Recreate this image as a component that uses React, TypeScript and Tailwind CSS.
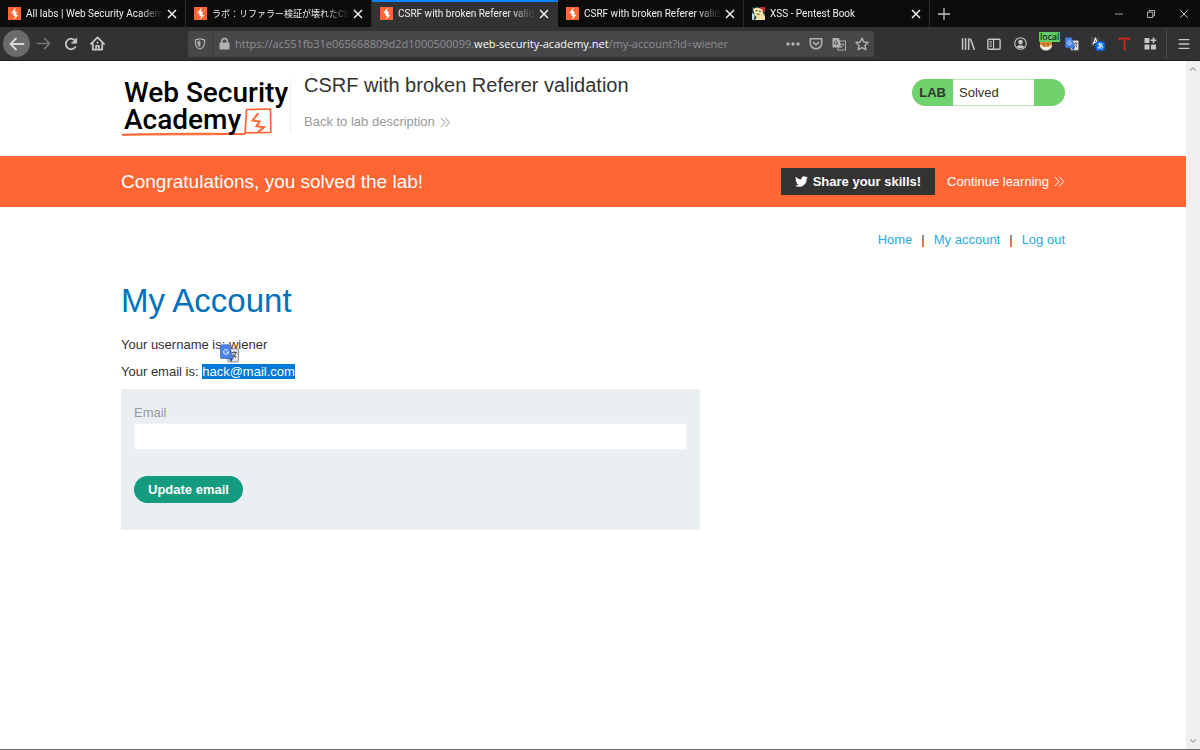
import React, { useState } from 'react';
import type { ReactNode } from 'react';
import { FaTwitter } from 'react-icons/fa';

function BoltIcon() {
  return (
    <svg viewBox="0 0 13 13" className="size-[13px] shrink-0" aria-hidden="true">
      <rect width="13" height="13" fill="#ff6633" />
      <path d="M7.600 .3 3.200 6.300h2.600L5 8.300 7.200 9.200 5.600 12.700 10.200 8.200 7.800 7.100 9.300 5 6.900 4.200z" fill="#fff" />
    </svg>
  );
}

function BookIcon() {
  return (
    <svg viewBox="0 0 14 14" className="size-[13px] shrink-0" aria-hidden="true">
      <rect width="14" height="14" fill="#16323c" />
      <rect x="9" width="5" height="5" fill="#d8242f" />
      <path d="M1 2 6 .5l5 2 1 4 2 3.500V14H3l2-3-2-2-1-3z" fill="#f6dfa0" />
      <path d="M0 6l3 3-1 5H0z" fill="#b9d8e8" />
      <path d="M4 4h2M7.500 4.500h2M5.500 7.500 8 8" stroke="#3a3128" strokeWidth="1" fill="none" />
    </svg>
  );
}

function CloseIcon() {
  return (
    <svg viewBox="0 0 10 10" className="size-[10px]" fill="none" stroke="currentColor" strokeWidth="1.500" aria-hidden="true">
      <path d="M1 1l8 8M9 1 1 9" />
    </svg>
  );
}

function DoubleChevron() {
  return (
    <svg viewBox="0 0 11 11" className="size-[11px] shrink-0" fill="none" stroke="currentColor" strokeWidth="1" aria-hidden="true">
      <path d="M.8.8 5 5.500.8 10.200M5.300.8 9.600 5.500 5.300 10.200" />
    </svg>
  );
}

function Stroke({ children, className = 'size-4' }: { children: ReactNode; className?: string }) {
  return (
    <svg
      viewBox="0 0 16 16"
      className={className}
      fill="none"
      stroke="currentColor"
      strokeWidth="1.6"
      strokeLinecap="round"
      strokeLinejoin="round"
      aria-hidden="true"
    >
      {children}
    </svg>
  );
}

function TranslateBadge({ className = 'size-4' }: { className?: string }) {
  return (
    <svg viewBox="0 0 18 18" className={className} aria-hidden="true">
      <rect x="7.500" y="4.500" width="10" height="12.500" rx="1" fill="#e4e4e4" stroke="#777" strokeWidth=".8" />
      <path d="M11 8h5M13.500 6.800V8M15.200 8c-.4 2-1.600 3.600-3 4.600M12.200 9.600c.8 1.400 1.800 2.400 3.200 3" stroke="#555" strokeWidth="1" fill="none" />
      <path d="M8.500 13.500h4l-2 3.800z" fill="#3450a8" />
      <path d="M1 .8h7.500l4 12.900H1a.6.6 0 0 1-.6-.6V1.400A.6.6 0 0 1 1 .8z" fill="#4a83ee" stroke="#3a62ad" strokeWidth=".7" />
      <path d="M7.300 5.800A2.300 2.300 0 1 0 8 7.500H5.800" stroke="#dbe7ff" strokeWidth="1" fill="none" />
    </svg>
  );
}

function Logo() {
  return (
    <a
      href="#academy"
      aria-label="Web Security Academy"
      className="relative block h-[58px] w-[165px] font-['Roboto',sans-serif] text-[28px] leading-[27px] font-medium whitespace-nowrap text-black"
    >
      <svg viewBox="0 0 165 58" className="absolute inset-0 h-full w-full" fill="none" stroke="#ff6633" aria-hidden="true">
        <path d="M1 55.500C30 55 80 54.300 124 55L125.500 30.500 149.500 30 149.800 53.500 123 53.800" strokeWidth="1.700" strokeLinejoin="round" />
        <path d="M1 56.300C40 55.500 90 56.300 124 55" strokeWidth="1" />
        <path d="M137.500 34 131.500 41.500 138.500 42.500 135.500 47.300 143 48.300 137 53" strokeWidth="2" />
      </svg>
      <span className="relative block pl-[3px]">Web Security</span>
      <span className="relative block pl-[3px]">Academy</span>
    </a>
  );
}

type TabInfo = { title: string; icon: 'bolt' | 'book'; compact?: boolean };

const tabs: TabInfo[] = [
  { title: 'All labs | Web Security Academy', icon: 'bolt' },
  { title: 'ラボ：リファラー検証が壊れたCSRF', icon: 'bolt', compact: true },
  { title: 'CSRF with broken Referer validation', icon: 'bolt' },
  { title: 'CSRF with broken Referer validation', icon: 'bolt' },
  { title: 'XSS - Pentest Book', icon: 'book' },
];

function TabStrip() {
  const [active, setActive] = useState(2);
  return (
    <div className="flex h-[27px] items-stretch bg-[#0c0c0d] text-[#f0f0f2]">
      {tabs.map((tab, i) => (
        <div
          key={i}
          className={
            i === active
              ? 'flex min-w-0 flex-[0_1_186px] items-center border-t-2 border-[#0a84ff] bg-[#323234] pr-[7px] pb-[2px] pl-2'
              : 'flex min-w-0 flex-[0_1_186px] items-center border-r border-[#2a2a2c] pr-[6px] pl-2'
          }
        >
          <button type="button" onClick={() => setActive(i)} className="flex min-w-0 flex-1 items-center gap-[5px] text-left">
            {tab.icon === 'bolt' ? <BoltIcon /> : <BookIcon />}
            <span
              className={`min-w-0 flex-1 overflow-hidden leading-4 whitespace-nowrap [mask-image:linear-gradient(to_right,black_calc(100%-24px),transparent)] ${
                tab.compact ? 'text-[9px]' : 'text-[10px]'
              }`}
            >
              {tab.title}
            </span>
          </button>
          <button type="button" aria-label="Close tab" className="ml-[2px] flex size-[14px] shrink-0 items-center justify-center">
            <CloseIcon />
          </button>
        </div>
      ))}
      <button type="button" aria-label="New tab" className="flex w-7 items-center justify-center text-[#c4c4c6]">
        <svg viewBox="0 0 12 12" className="size-3" fill="none" stroke="currentColor" strokeWidth="1.300" aria-hidden="true">
          <path d="M6 0v12M0 6h12" />
        </svg>
      </button>
      <div className="ml-auto flex items-center text-[#c0c0c0]">
        <button type="button" aria-label="Minimize" className="flex h-full w-8 items-center justify-center">
          <svg viewBox="0 0 8 8" className="size-2" stroke="currentColor" strokeWidth=".8" aria-hidden="true">
            <path d="M0 4h8" />
          </svg>
        </button>
        <button type="button" aria-label="Restore" className="flex h-full w-8 items-center justify-center">
          <svg viewBox="0 0 8 8" className="size-2" fill="none" stroke="currentColor" strokeWidth=".9" aria-hidden="true">
            <path d="M.5 2.200h5.300v5.300H.5zM2.200 2V.5h5.300v5.300H6" />
          </svg>
        </button>
        <button type="button" aria-label="Close window" className="flex h-full w-[33px] items-center justify-center">
          <svg viewBox="0 0 8 8" className="size-2" fill="none" stroke="currentColor" aria-hidden="true">
            <path d="M.3.3l7.400 7.400M7.700.3.3 7.700" />
          </svg>
        </button>
      </div>
    </div>
  );
}

function ToolButton({ label, children }: { label: string; children: ReactNode }) {
  return (
    <button type="button" aria-label={label} className="relative flex h-[26px] w-[26px] shrink-0 items-center justify-center">
      {children}
    </button>
  );
}

function Toolbar() {
  return (
    <div className="flex h-[34px] items-center border-b border-[#1c1c1e] bg-[#323234] pl-[3px] text-[#c6c6c8]">
      <button type="button" aria-label="Back" className="flex size-[27px] shrink-0 items-center justify-center rounded-full bg-[#6b6b6d] text-[#d8d8da]">
        <Stroke>
          <path d="M14.500 8h-13M7 2.500 1.500 8 7 13.500" strokeWidth="1.800" />
        </Stroke>
      </button>
      <button type="button" aria-label="Forward" className="flex size-[27px] shrink-0 items-center justify-center text-[#79797b]">
        <Stroke className="size-[15px]">
          <path d="M1.500 8h13M9 2.500 14.500 8 9 13.500" />
        </Stroke>
      </button>
      <button type="button" aria-label="Reload" className="flex size-[27px] shrink-0 items-center justify-center">
        <Stroke className="size-[14px]">
          <path d="M13 11.500A6 6 0 1 1 13 4.500" strokeWidth="2" />
          <path d="M14.500 1.500v5.500H9z" fill="currentColor" strokeWidth="1" />
        </Stroke>
      </button>
      <button type="button" aria-label="Home" className="flex size-[27px] shrink-0 items-center justify-center">
        <Stroke className="size-[15px]">
          <path d="M1 8.500 8 1.500l7 7M3 8v6.500h10V8M6.500 14.500v-4h3v4" strokeWidth="1.900" />
          <path d="M8 6.800v.4" strokeWidth="2" />
        </Stroke>
      </button>

      <div className="ml-[77px] flex h-[26px] min-w-0 flex-[0_1_686px] items-center rounded-[2px] bg-[#474749] text-[#b1b1b3]">
        <button type="button" aria-label="Site protection" className="flex h-full w-[25px] shrink-0 items-center justify-center border-r border-[#3b3b3d]">
          <Stroke className="size-3">
            <path d="M8 1 14 2.500v4.500c0 4-2.500 6.500-6 8-3.500-1.500-6-4-6-8V2.500z" />
            <path d="M8 4.500v7c-2-1-2.800-2.500-2.800-5V5z" fill="currentColor" strokeWidth="1" />
          </Stroke>
        </button>
        <button type="button" aria-label="Connection secure" className="ml-1 flex h-full w-[14px] shrink-0 items-center justify-center">
          <svg viewBox="0 0 12 14" className="h-[13px] w-[11px]" aria-hidden="true">
            <path d="M3 7V4.500a3 3 0 0 1 6 0V7" fill="none" stroke="currentColor" strokeWidth="1.800" />
            <rect x=".5" y="6" width="11" height="7.500" rx="1" fill="currentColor" />
          </svg>
        </button>
        <div
          role="textbox"
          aria-label="Address"
          tabIndex={0}
          className="ml-1 min-w-0 flex-1 overflow-hidden text-[11px] leading-5 whitespace-nowrap text-[#8f8f91]"
        >
          https://ac551fb31e065668809d2d1000500099.<span className="text-[#f9f9fa]">web-security-academy.net</span>/my-account?id=wiener
        </div>
        <div className="flex shrink-0 items-center gap-[9px] pr-[5px]">
          <button type="button" aria-label="Page actions">
            <svg viewBox="0 0 14 4" className="h-1 w-[14px]" fill="currentColor" aria-hidden="true">
              <circle cx="2" cy="2" r="1.700" />
              <circle cx="7" cy="2" r="1.700" />
              <circle cx="12" cy="2" r="1.700" />
            </svg>
          </button>
          <button type="button" aria-label="Save to Pocket">
            <Stroke className="size-[14px]">
              <path d="M1.500 2h13v5a6.500 6.500 0 0 1-13 0zM5 6.200 8 9l3-2.800" strokeWidth="1.800" />
            </Stroke>
          </button>
          <button type="button" aria-label="Translate page">
            <svg viewBox="0 0 14 14" className="size-[14px]" aria-hidden="true">
              <rect x="6" y="4" width="7.500" height="9" fill="none" stroke="currentColor" />
              <path d="M8.500 7h3.500l-2.500 3.500" fill="none" stroke="currentColor" strokeWidth=".9" />
              <path d="M.5 1h6.500l2.500 9.500H.5z" fill="currentColor" />
              <path d="M5.300 4.600a1.700 1.700 0 1 0 .4 1.400H4" fill="none" stroke="#474749" strokeWidth=".9" />
            </svg>
          </button>
          <button type="button" aria-label="Bookmark page">
            <Stroke className="size-[14px]">
              <path d="m8 1.300 2.100 4.400 4.800.6-3.500 3.300.9 4.800L8 12.100l-4.300 2.300.9-4.800L1.100 6.300l4.800-.6z" />
            </Stroke>
          </button>
        </div>
      </div>

      <div className="ml-auto flex h-full items-center">
        <ToolButton label="Library">
          <Stroke className="size-[14px]">
            <path d="M1.800 2v12M5.300 2v12M8.800 2v12M11 2.500 15 14" strokeWidth="1.800" />
          </Stroke>
        </ToolButton>
        <ToolButton label="Sidebar">
          <Stroke className="size-[14px]">
            <rect x="1" y="2.500" width="14" height="11.500" rx="1.500" />
            <path d="M7.500 3v11M3.500 5.500h1.500M3.500 8H5M3.500 10.500H5" strokeWidth="1.300" />
          </Stroke>
        </ToolButton>
        <ToolButton label="Account">
          <svg viewBox="0 0 14 14" className="size-[13px]" aria-hidden="true">
            <circle cx="7" cy="7" r="6.200" fill="none" stroke="currentColor" strokeWidth="1.200" />
            <circle cx="7" cy="5.500" r="2.500" fill="currentColor" />
            <path d="M2.800 10.500C4.500 8.300 9.500 8.300 11.200 10.500 9.500 12.700 4.500 12.700 2.800 10.500z" fill="currentColor" />
          </svg>
        </ToolButton>
        <div className="relative flex h-[26px] w-[26px] items-center justify-center">
          <button type="button" aria-label="Proxy switcher">
            <svg viewBox="0 0 14 14" className="size-[14px]" aria-hidden="true">
              <path d="M1 3l3 1h6l3-1v5a6 5 0 0 1-12 0z" fill="#e08a35" />
              <path d="M1 8c2 0 2.500 1 3.500 2h5C10.500 9 11 8 13 8c0 3.500-3 5.500-6 5.500S1 11.500 1 8z" fill="#eeeae4" />
              <path d="M4.500 9.500h5L7 8z" fill="#e08a35" />
              <circle cx="5" cy="7" r=".8" fill="#513017" />
              <circle cx="9" cy="7" r=".8" fill="#513017" />
            </svg>
          </button>
          <span className="absolute top-px left-[6px] rounded-[1px] bg-[#62cc60] px-px text-[9px] leading-[10px] text-black">local</span>
        </div>
        <ToolButton label="Translate">
          <TranslateBadge className="size-[14px]" />
        </ToolButton>
        <ToolButton label="Japanese translation">
          <svg viewBox="0 0 14 14" className="size-[14px]" aria-hidden="true">
            <rect width="9" height="9" rx="1" fill="#47474a" />
            <path d="M2 7.500 4.500 1.500 7 7.500M3 5.500h3" fill="none" stroke="#fff" strokeWidth="1.100" />
            <rect x="4.500" y="4.500" width="9.300" height="9.300" rx="2" fill="#0a6cf0" />
            <path d="M6.700 7h5M9 5.700v5.500M11 7.700c-.5 2.500-2.200 4-3.600 3.600-1.200-.7.500-3 3-2.600 2 .4 1.700 2.600-.2 3.200" fill="none" stroke="#fff" strokeWidth=".9" />
          </svg>
        </ToolButton>
        <ToolButton label="Text tools">
          <svg viewBox="0 0 12 14" className="h-[14px] w-3" aria-hidden="true">
            <path d="M.5.500h11.500v4l-1.500-2H7.600v9.500l1.500 1H4.300l1.300-1V2.500H2.200L.5 4.500z" fill="#c42a1c" />
          </svg>
        </ToolButton>
        <ToolButton label="Add-ons">
          <svg viewBox="0 0 13 13" className="size-[13px]" fill="currentColor" aria-hidden="true">
            <rect x=".5" y="1" width="5" height="5" rx=".6" />
            <rect x=".5" y="7.500" width="5" height="5" rx=".6" />
            <rect x="7" y="7.500" width="5" height="5" rx=".6" />
            <path d="M8.700.5h1.600v2h2v1.600h-2v2H8.700v-2h-2V2.500h2z" />
          </svg>
        </ToolButton>
        <div className="ml-[3px] flex h-7 items-center border-l border-[#4c4c4e] pr-[3px] pl-1">
          <ToolButton label="Open menu">
            <Stroke className="size-[14px]">
              <path d="M2.500 3h11M2.500 8h11M2.500 13h11" />
            </Stroke>
          </ToolButton>
        </div>
      </div>
    </div>
  );
}

function LabPage() {
  const [email, setEmail] = useState('');
  return (
    <div className="min-w-0 flex-1 bg-white text-[13px] leading-5 text-[#333332]">
      <header className="mx-auto flex max-w-[944px] items-start pt-[18px] pb-[19px]">
        <Logo />
        <div className="ml-1 flex h-[53px] flex-col justify-between border-l border-[#eeeeee] pl-[13px]">
          <h1 className="-mt-2 text-xl leading-7">CSRF with broken Referer validation</h1>
          <a href="#description" className="flex items-center gap-[5px] text-[#999999]">
            Back to lab description
            <DoubleChevron />
          </a>
        </div>
        <div className="ml-auto flex h-[27px] overflow-hidden rounded-full bg-[#70d26c]">
          <strong className="px-[7px] leading-[27px]">LAB</strong>
          <span className="w-[81px] border-y border-[#b7e8b5] bg-white pl-[6px] leading-[25px]">Solved</span>
          <span className="w-[31px]" />
        </div>
      </header>

      <section className="bg-[#ff6633] text-white">
        <div className="mx-auto flex h-[51px] max-w-[944px] items-center">
          <h2 className="flex-1 text-[19px] leading-7">Congratulations, you solved the lab!</h2>
          <button type="button" className="mr-3 flex h-[27px] items-center gap-[5px] bg-[#333332] px-[14px] font-bold">
            <FaTwitter className="size-[13px]" aria-hidden="true" />
            Share your skills!
          </button>
          <a href="#learning" className="flex items-center gap-[5px]">
            Continue learning
            <DoubleChevron />
          </a>
        </div>
      </section>

      <main className="mx-auto max-w-[944px]">
        <nav className="flex justify-end gap-[9px] pt-[23px]">
          <a href="#home" className="text-[#29abe2]">Home</a>
          <span>|</span>
          <a href="#account" className="text-[#29abe2]">My account</a>
          <span>|</span>
          <a href="#logout" className="text-[#29abe2]">Log out</a>
        </nav>
        <h1 className="pt-[31px] text-[33px] leading-10 text-[#0071bc]">My Account</h1>
        <p className="pt-[14px]">Your username is: wiener</p>
        <p className="pt-[7px]">
          Your email is:{' '}
          <span className="relative inline-block bg-[#0078d7] leading-[15px] text-white">
            hack@mail.com
            <button type="button" aria-label="Translate selection" className="absolute -top-5 left-[18px]">
              <TranslateBadge className="size-[19px]" />
            </button>
          </span>
        </p>
        <form className="mt-[7px] max-w-[579px] bg-[#eaeff2] px-[13px] pt-[14px] pb-[27px]" onSubmit={(e) => e.preventDefault()}>
          <label htmlFor="email" className="block text-[#999999]">Email</label>
          <input
            id="email"
            type="email"
            value={email}
            onChange={(e) => setEmail(e.target.value)}
            className="block h-[27px] w-full border border-[#f0f3f5] bg-white px-2 outline-none"
          />
          <button type="submit" className="mt-[26px] flex h-[27px] items-center rounded-full bg-[#159c80] px-[14px] font-bold text-white">
            Update email
          </button>
        </form>
      </main>
    </div>
  );
}

export default function App() {
  return (
    <div className="flex min-h-screen flex-col border-b border-[#666666] bg-white font-['Liberation_Sans',Arial,sans-serif]">
      <div className="font-['Roboto','Noto_Sans_CJK_JP',sans-serif]">
        <TabStrip />
      </div>
      <div className="font-['Open_Sans','Noto_Sans_CJK_JP',sans-serif]">
        <Toolbar />
      </div>
      <div className="flex flex-1">
        <LabPage />
        <div className="flex w-[14px] shrink-0 flex-col items-center justify-between bg-[#f0f0f0] py-1 text-[#a8a8a8]" aria-hidden="true">
          <svg viewBox="0 0 8 8" className="size-2" fill="none" stroke="currentColor" strokeWidth="1.300">
            <path d="M1.300 5.500 4 2.800l2.700 2.700" />
          </svg>
          <svg viewBox="0 0 8 8" className="size-2" fill="none" stroke="currentColor" strokeWidth="1.300">
            <path d="M1.300 2.500 4 5.200l2.700-2.700" />
          </svg>
        </div>
      </div>
    </div>
  );
}
